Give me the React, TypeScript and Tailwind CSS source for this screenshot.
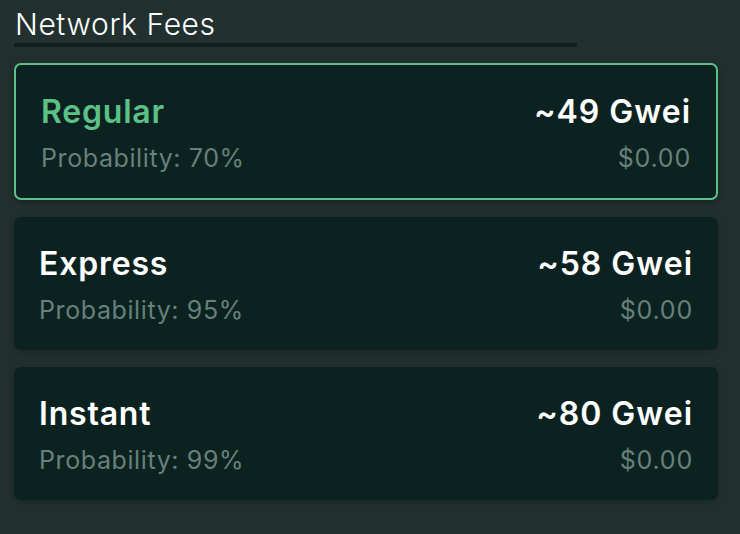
import React from "react";

const fees = [
  { name: "Regular", gwei: "~49 Gwei", prob: "70%", usd: "$0.00", selected: true },
  { name: "Express", gwei: "~58 Gwei", prob: "95%", usd: "$0.00", selected: false },
  { name: "Instant", gwei: "~80 Gwei", prob: "99%", usd: "$0.00", selected: false },
];

export default function App() {
  return (
    <div
      className="w-[740px] h-[534px] bg-[#223130] overflow-hidden"
      style={{ fontFamily: "Inter, 'Noto Sans', sans-serif" }}
    >
      <div className="pl-[14px] pr-[22px] pt-[7px]">
        <div className="w-[563px]">
          <h1 className="pl-[1px] text-[30px] leading-[34px] font-light text-white tracking-[0.6px]">
            Network Fees
          </h1>
          <div className="mt-[2px] h-[4px] bg-[#0f1f1d] rounded-[1px]" />
        </div>
        <div className="mt-[16px] flex flex-col gap-[17px]">
          {fees.map((f) => (
            <div
              key={f.name}
              className={
                f.selected
                  ? "rounded-[7px] bg-[#0c2220] border-2 border-[#5cc187] px-[25px] pt-[28px] pb-[25px] flex justify-between shadow-[0_2px_10px_rgba(0,0,0,0.35)]"
                  : "rounded-[7px] bg-[#0c2220] px-[25px] pt-[28px] pb-[25px] flex justify-between shadow-[0_2px_10px_rgba(0,0,0,0.25)]"
              }
            >
              <div className="flex flex-col">
                <span
                  className={
                    f.selected
                      ? "text-[32px] leading-[38px] font-semibold text-[#5cc187] tracking-[0.8px]"
                      : "text-[32px] leading-[38px] font-semibold text-white tracking-[0.8px]"
                  }
                >
                  {f.name}
                </span>
                <span className="mt-[12px] text-[25px] leading-[30px] text-[#66807b] tracking-[0.6px]">
                  Probability: {f.prob}
                </span>
              </div>
              <div className="flex flex-col items-end">
                <span className="text-[32px] leading-[38px] font-semibold text-white tracking-[1px]">
                  {f.gwei}
                </span>
                <span className="mt-[12px] text-[25px] leading-[30px] text-[#66807b] tracking-[0.8px]">
                  {f.usd}
                </span>
              </div>
            </div>
          ))}
        </div>
      </div>
    </div>
  );
}
